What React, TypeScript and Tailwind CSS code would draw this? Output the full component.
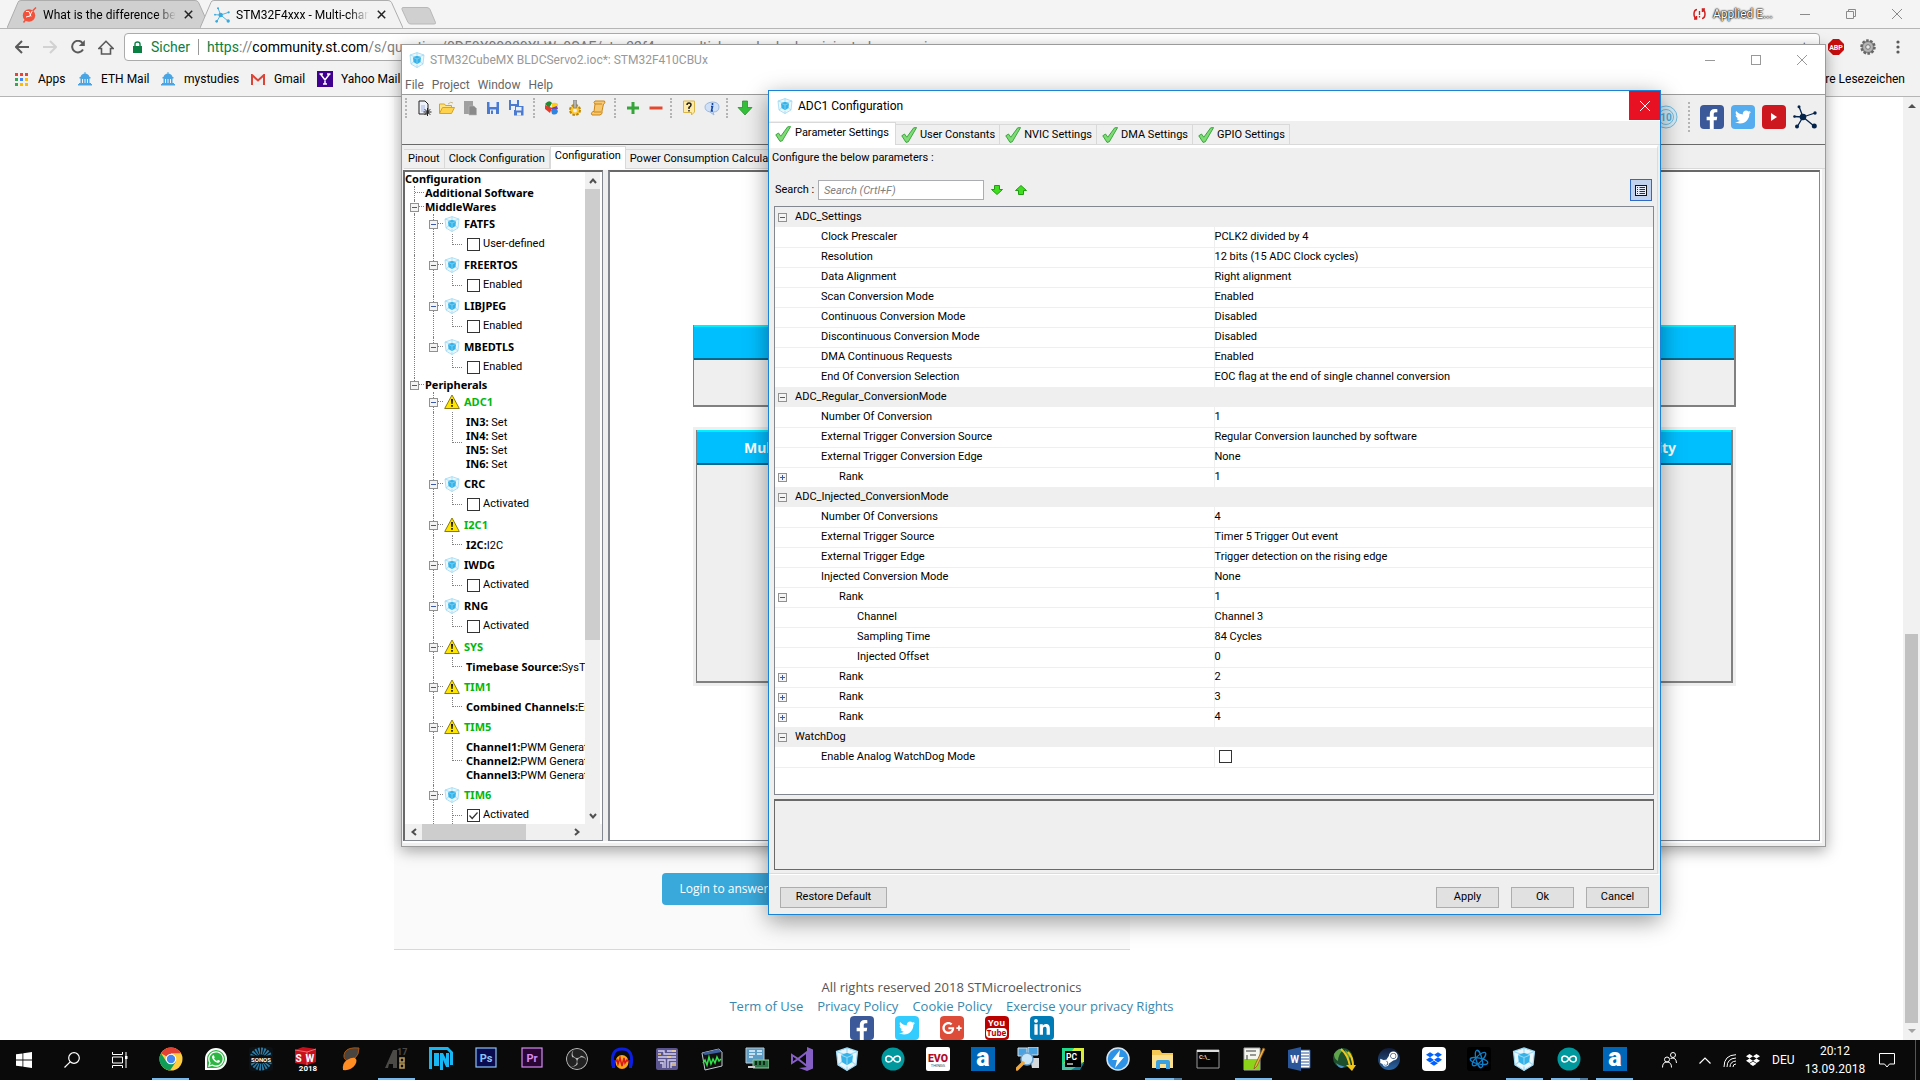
import { useState } from 'react'
import type { ReactNode } from 'react'
import {
    FaDropbox,
    FaFacebookF,
    FaGooglePlusG,
    FaLinkedinIn,
    FaSteamSymbol,
    FaTwitter,
    FaWhatsapp,
} from 'react-icons/fa'
import { SiObsstudio } from 'react-icons/si'

/* ---------- shared icons ---------- */

interface IconProps {
    className?: string
}

function CubeIcon({ className = 'h-4 w-4' }: IconProps) {
    return (
        <svg viewBox="0 0 16 16" className={className} aria-hidden="true">
            <path
                d="M8 .6 15 3l-1 9-6 3.6L2 12 1 3z"
                fill="#e9f7fd"
                stroke="#9fd9f3"
                strokeWidth=".8"
            />
            <path
                d="M1 3l7 2.6L15 3M8 .6v3M2 12l3-2.400M14 12l-3-2.400M8 13v2.500"
                fill="none"
                stroke="#9fd9f3"
                strokeWidth=".8"
            />
            <path d="M8 3.800 12 5.300 11.500 10 8 12.200 4.500 10 4 5.300z" fill="#35b3e8" />
            <path
                d="M4 5.300 8 7l4-1.700M8 7v5"
                fill="none"
                stroke="#8fd8f6"
                strokeWidth=".7"
            />
        </svg>
    )
}

function WarningIcon({ className = 'h-4 w-4' }: IconProps) {
    return (
        <svg viewBox="0 0 16 16" className={className} aria-hidden="true">
            <path
                d="M8 1 15.300 14.500H.7z"
                fill="#ffe600"
                stroke="#8a7a10"
                strokeWidth="1"
                strokeLinejoin="round"
            />
            <path d="M7 5h2l-.4 5H7.400zM7.200 11h1.600v1.700H7.200z" fill="#111" />
        </svg>
    )
}

function CheckIcon() {
    return (
        <svg viewBox="0 0 16 16" className="h-4 w-4 shrink-0" aria-hidden="true">
            <path
                d="M.8 8.800 3.500 7l2.300 3.200L12.700.8 15.600.6 7.300 14.800 5 15.400z"
                fill="#7fdc74"
                stroke="#2f9e36"
                strokeWidth=".9"
                strokeLinejoin="round"
            />
        </svg>
    )
}

function NodesIcon({ className, color }: { className: string; color: string }) {
    return (
        <svg viewBox="0 0 24 24" className={className} aria-hidden="true">
            <path
                d="M10 12 6 1.500M10 12 22 8M10 12 1 11.500M10 12 4 22M10 12l11 9"
                stroke={color}
                strokeWidth="1.300"
            />
            <g fill={color}>
                <circle cx="10" cy="12" r="3.300" />
                <circle cx="6" cy="1.800" r="1.500" />
                <circle cx="22" cy="8" r="1.700" />
                <circle cx="1.500" cy="11.500" r="1.300" />
                <circle cx="4" cy="21.500" r="2" />
                <circle cx="21.300" cy="21" r="2.500" />
            </g>
        </svg>
    )
}

function CloseGlyph({ className = 'h-2.5 w-2.5' }: IconProps) {
    return (
        <svg viewBox="0 0 10 10" className={className} aria-hidden="true">
            <path d="M0 0l10 10M10 0 0 10" stroke="currentColor" fill="none" />
        </svg>
    )
}

function Expander({ open }: { open: boolean }) {
    return (
        <svg viewBox="0 0 9 9" className="h-[9px] w-[9px]" aria-hidden="true">
            <rect x=".5" y=".5" width="8" height="8" fill="#f4f4f4" stroke="#919191" />
            <path
                d={open ? 'M2 4.500h5' : 'M2 4.500h5M4.500 2v5'}
                stroke="#3b5aa9"
                fill="none"
            />
        </svg>
    )
}

function CheckBox({ id, checked = false }: { id: string; checked?: boolean }) {
    return (
        <span className="relative flex h-[13px] w-[13px] shrink-0">
            <input
                id={id}
                type="checkbox"
                defaultChecked={checked}
                className="peer h-[13px] w-[13px] appearance-none border border-[#333] bg-white"
            />
            <svg
                viewBox="0 0 13 13"
                className="pointer-events-none absolute inset-0 hidden peer-checked:block"
                aria-hidden="true"
            >
                <path d="M2.500 6.500l2.700 3L10.500 3.500" stroke="#333" fill="none" strokeWidth="1.200" />
            </svg>
        </span>
    )
}

/* ---------- browser ---------- */

function TabShape({ fill }: { fill: string }) {
    return (
        <svg
            viewBox="0 0 204 28"
            preserveAspectRatio="none"
            className="absolute inset-0 h-full w-full"
            aria-hidden="true"
        >
            <path
                d="M0 28 11 2.500Q11.500 .5 14 .5H189Q191.500 .5 192.500 2.500L204 28"
                fill={fill}
                stroke="#adadad"
            />
        </svg>
    )
}

function BrowserTab({
    icon,
    title,
    active,
}: {
    icon: ReactNode
    title: string
    active: boolean
}) {
    return (
        <div className={`relative -mr-2.5 h-7 w-[203px] ${active ? 'z-10' : ''}`}>
            <TabShape fill={active ? '#f2f2f2' : '#d0d0d0'} />
            <div className="relative flex h-full items-center pt-px pr-[17px] pl-[14px]">
                <span className="flex h-4 w-4 items-center justify-center">{icon}</span>
                <button
                    type="button"
                    className="ml-[6px] min-w-0 flex-1 overflow-hidden mask-r-from-85% text-left whitespace-nowrap"
                >
                    {title}
                </button>
                <button type="button" title="Close tab" className="ml-[8px]">
                    <svg viewBox="0 0 9 9" className="h-[9px] w-[9px]" aria-hidden="true">
                        <path d="M.8.8l7.400 7.400M8.200.8.8 8.200" stroke="#222" strokeWidth="1.500" />
                    </svg>
                </button>
            </div>
        </div>
    )
}

function TabStrip() {
    return (
        <div className="flex h-[29px] border-b border-[#b5b5b5] bg-[#f4f4f4] pl-[7px]">
            <BrowserTab
                active={false}
                title="What is the difference between"
                icon={
                    <svg viewBox="0 0 16 16" className="h-4 w-4" aria-hidden="true">
                        <circle cx="8" cy="8.500" r="6.200" fill="#f0523d" />
                        <path
                            d="M12 3 10 6l-1 3-4 1M5 4.500h3l2 5"
                            stroke="#fff"
                            fill="none"
                            strokeWidth="1"
                        />
                        <path d="M15 .5 11.500 4M2.500 15.500 4.500 13" stroke="#f0523d" strokeWidth="1.500" />
                    </svg>
                }
            />
            <BrowserTab
                active
                title="STM32F4xxx - Multi-channel ADC"
                icon={<NodesIcon className="h-4 w-4" color="#39a9dc" />}
            />
            <button type="button" title="New tab" className="mt-[7px] ml-[8px] h-[18px] w-9">
                <svg viewBox="0 0 36 18" className="h-full w-full" aria-hidden="true">
                    <path
                        d="M2 .5H26Q28 .5 29 2.500L34.500 15.500Q35 17 33 17H10Q8 17 7 15.500L1 2.500Q.5 .5 2 .5z"
                        fill="#d0d0d0"
                        stroke="#b8b8b8"
                    />
                </svg>
            </button>
            <div className="ml-auto flex h-7 items-center pr-[18px] text-[#8a8a8a]">
                <svg viewBox="0 0 13 12" className="h-3 w-[13px]" aria-hidden="true">
                    <path
                        d="M4 1.500Q1 2 1 6t3 4.500M9 10.500q3-.5 3-4.500T9 1.500M3.500 8v3H1M9.500 4V1H12"
                        fill="none"
                        stroke="#d01f1f"
                        strokeWidth="1.500"
                    />
                    <path d="M6.500 3v4M6.500 8v1.500" stroke="#d01f1f" strokeWidth="1.300" />
                </svg>
                <span className="mr-[33px] ml-[7px] w-[54px] whitespace-nowrap text-white [text-shadow:0_0_2px_#000,0_0_2px_#000,0_0_1px_#000]">
                    Applied E...
                </span>
                <button type="button" title="Minimize" className="w-2.5 border-t border-current" />
                <button type="button" title="Restore" className="ml-9">
                    <svg viewBox="0 0 10 10" className="h-2.5 w-2.5" aria-hidden="true">
                        <path d="M.5 2.500h7v7h-7zM2.500 2.500v-2h7v7h-2" fill="none" stroke="currentColor" />
                    </svg>
                </button>
                <button type="button" title="Close" className="ml-9">
                    <CloseGlyph />
                </button>
            </div>
        </div>
    )
}

function AddressBar() {
    return (
        <div className="flex h-9 items-center px-[15px] text-[#5a5a5a]">
            <button type="button" title="Back">
                <svg viewBox="0 0 14 14" className="h-3.5 w-3.5" aria-hidden="true">
                    <path d="M14 7H1.500M7 1 1 7l6 6" fill="none" stroke="currentColor" strokeWidth="2" />
                </svg>
            </button>
            <button type="button" title="Forward" className="ml-3.5 text-[#d2d2d2]">
                <svg viewBox="0 0 14 14" className="h-3.5 w-3.5" aria-hidden="true">
                    <path d="M0 7h12.500M7 1l6 6-6 6" fill="none" stroke="currentColor" strokeWidth="2" />
                </svg>
            </button>
            <button type="button" title="Reload" className="ml-3.5">
                <svg viewBox="0 0 14 14" className="h-3.5 w-3.5" aria-hidden="true">
                    <path d="M12 9.500A5.800 5.800 0 1 1 11.500 3" fill="none" stroke="currentColor" strokeWidth="2" />
                    <path d="M13.800 0v6H7.800z" fill="currentColor" />
                </svg>
            </button>
            <button type="button" title="Home" className="ml-[13px]">
                <svg viewBox="0 0 16 15" className="h-[15px] w-4" aria-hidden="true">
                    <path
                        d="M8 1.300.8 8.500H3.500V14H12.500V8.500H15.200z"
                        fill="none"
                        stroke="currentColor"
                        strokeWidth="1.600"
                    />
                </svg>
            </button>
            <div className="ml-2.5 flex h-7 flex-1 items-center rounded-sm border border-[#ababab] bg-white pl-2 text-sm">
                <svg viewBox="0 0 9 12" className="h-3 w-[9px]" aria-hidden="true">
                    <path d="M0 5h9v7H0z" fill="#0b8043" />
                    <path d="M2 5V3Q2 1 4.500 1T7 3v2" fill="none" stroke="#0b8043" strokeWidth="1.400" />
                </svg>
                <span className="ml-[9px] text-[#0b8043]">Sicher</span>
                <span className="mx-2 h-4 w-px bg-[#999]" />
                <div className="min-w-0 flex-1 overflow-hidden whitespace-nowrap text-[#808080]">
                    <span className="text-[#0b8043]">https</span>://
                    <span className="text-black">community.st.com</span>
                    /s/question/0D50X00009XkWe0SAF/stm32f4xxx-multichannel-adc-dma-injected-conversion
                </div>
                <span className="mr-2 text-[#5a5a5a]">★</span>
            </div>
            <svg viewBox="0 0 16 16" className="ml-2 h-4 w-4" aria-hidden="true">
                <path d="M5 0h6l5 5v6l-5 5H5l-5-5V5z" fill="#c70d0d" />
                <text x="8" y="10.500" textAnchor="middle" fontSize="7" fontWeight="700" fill="#fff">
                    ABP
                </text>
            </svg>
            <svg viewBox="0 0 16 16" className="ml-4 h-4 w-4" aria-hidden="true">
                <circle cx="8" cy="8" r="6.500" fill="#8d8d8d" stroke="#666" strokeDasharray="2.500 1.500" strokeWidth="2.500" />
                <circle cx="8" cy="8" r="4.800" fill="#b5b5b5" />
                <circle cx="8" cy="8" r="2.300" fill="#e8e8e8" stroke="#777" />
            </svg>
            <svg viewBox="0 0 4 14" className="mr-[5px] ml-5 h-3.5 w-1" aria-hidden="true">
                <g fill="#5a5a5a">
                    <circle cx="2" cy="2" r="1.600" />
                    <circle cx="2" cy="7" r="1.600" />
                    <circle cx="2" cy="12" r="1.600" />
                </g>
            </svg>
        </div>
    )
}

const appColors = [
    '#ea4335', '#ea4335', '#ea4335',
    '#34a853', '#4285f4', '#fbbc05',
    '#34a853', '#fbbc05', '#fbbc05',
]

function AppsIcon() {
    return (
        <span className="grid h-[13px] w-[13px] grid-cols-3 gap-[2px]">
            {appColors.map((color, index) => (
                <span key={index} style={{ backgroundColor: color }} />
            ))}
        </span>
    )
}

function DomeIcon() {
    return (
        <svg viewBox="0 0 14 14" className="h-3.5 w-3.5" aria-hidden="true">
            <path
                d="M6.500 0h1v1.500Q11 2 11.500 5h1v1.500h-1V11H13v1h1v1.500H0V12h1v-1h1.500V6.500h-1V5h1Q3 2 6.500 1.500z"
                fill="#4aa5e4"
            />
            <path d="M4.500 7v4M7 7v4M9.500 7v4" stroke="#f2f2f2" />
        </svg>
    )
}

const bookmarks = [
    { id: 'apps', title: 'Apps', icon: <AppsIcon />, width: 'w-[63px]', gap: 'gap-2.5' },
    { id: 'eth', title: 'ETH Mail', icon: <DomeIcon />, width: 'w-[83px]', gap: 'gap-[9px]' },
    { id: 'studies', title: 'mystudies', icon: <DomeIcon />, width: 'w-[90px]', gap: 'gap-[9px]' },
    {
        id: 'gmail',
        title: 'Gmail',
        icon: (
            <svg viewBox="0 0 14 11" className="h-[11px] w-3.5" aria-hidden="true">
                <path d="M0 0h14v11H0z" fill="#eee" />
                <path d="M1 11V1l6 5.500L13 1v10" fill="none" stroke="#dc4437" strokeWidth="2" />
            </svg>
        ),
        width: 'w-[66px]',
        gap: 'gap-[9px]',
    },
    {
        id: 'yahoo',
        title: 'Yahoo Mail',
        icon: (
            <svg viewBox="0 0 16 16" className="h-4 w-4" aria-hidden="true">
                <path d="M0 0h16v16H0z" fill="#400090" />
                <path d="M3.500 3 8 9l4.500-6M8 8.500V13M6 13h4M2.500 3H6M10 3h3.500" stroke="#fff" fill="none" strokeWidth="1.500" />
            </svg>
        ),
        width: 'w-[90px]',
        gap: 'gap-2',
    },
]

function BookmarkBar() {
    return (
        <div className="flex h-8 items-center border-b border-[#b5b5b5] px-[15px] pb-[3px]">
            {bookmarks.map((item) => (
                <a
                    key={item.id}
                    href="#"
                    className={`flex shrink-0 items-center whitespace-nowrap ${item.width} ${item.gap}`}
                >
                    {item.icon}
                    {item.title}
                </a>
            ))}
            <a href="#" className="ml-auto">
                Andere Lesezeichen
            </a>
        </div>
    )
}

const footerLinks = [
    'Term of Use',
    'Privacy Policy',
    'Cookie Policy',
    'Exercise your privacy Rights',
]

function WebPage() {
    return (
        <main className="flex min-h-0 flex-1 bg-white">
            <div className="flex flex-1 flex-col overflow-hidden font-['Open_Sans',sans-serif]">
                <section className="mr-[773px] ml-[394px] h-[853px] shrink-0 border-b border-[#d8d8d8] bg-[#fafafa] pt-[776px] pl-[268px]">
                    <button
                        type="button"
                        className="h-8 w-[124px] rounded bg-[#39a9dc] text-[12px] text-white"
                    >
                        Login to answer
                    </button>
                </section>
                <footer className="flex flex-col items-center pt-7 text-[13px] leading-[19px] text-[#555]">
                    <p>All rights reserved 2018 STMicroelectronics</p>
                    <nav className="flex gap-3.5 text-[#3a87ad]">
                        {footerLinks.map((link) => (
                            <a key={link} href="#">
                                {link}
                            </a>
                        ))}
                    </nav>
                    <div className="flex gap-[21px] text-white">
                        <a href="#" aria-label="Facebook" className="flex h-6 w-6 items-end justify-center rounded bg-[#3b5998]">
                            <FaFacebookF className="h-5 w-5" />
                        </a>
                        <a href="#" aria-label="Twitter" className="flex h-6 w-6 items-center justify-center rounded bg-[#33ccff]">
                            <FaTwitter className="h-4 w-4" />
                        </a>
                        <a href="#" aria-label="Google+" className="flex h-6 w-6 items-center justify-center rounded bg-[#dd4b39]">
                            <FaGooglePlusG className="h-5 w-5" />
                        </a>
                        <a href="#" aria-label="YouTube" className="flex h-6 w-6 flex-col items-center justify-center rounded bg-[#bb0000] text-[9px] leading-[10px] font-bold">
                            <span>You</span>
                            <span className="rounded-sm bg-white px-px text-[8px] text-[#bb0000]">Tube</span>
                        </a>
                        <a href="#" aria-label="LinkedIn" className="flex h-6 w-6 items-center justify-center rounded bg-[#007bb6]">
                            <FaLinkedinIn className="h-[18px] w-[18px]" />
                        </a>
                    </div>
                </footer>
            </div>
            <div className="flex w-[17px] flex-col items-center bg-[#f1f1f1]">
                <span className="mt-[7px] border-x-4 border-b-4 border-x-transparent border-b-[#505050]" />
                <span className="mt-auto h-[389px] w-[13px] bg-[#c1c1c1]" />
                <span className="mt-1.5 mb-[7px] border-x-4 border-t-4 border-x-transparent border-t-[#a3a3a3]" />
            </div>
        </main>
    )
}

/* ---------- CubeMX window ---------- */

function Grip({ className = 'h-5' }: IconProps) {
    return <span className={`w-0.5 border-l-2 border-dotted border-[#b4b4b4] ${className}`} />
}

function ToolButton({ title, children }: { title: string; children: ReactNode }) {
    return (
        <button type="button" title={title} className="flex w-[23px] justify-center">
            <svg viewBox="0 0 16 16" className="h-4 w-4" aria-hidden="true">
                {children}
            </svg>
        </button>
    )
}

function ToolBar() {
    return (
        <div className="flex h-[50px] shrink-0 justify-between border-b border-[#696969] bg-[#efefef] pr-2 pl-[3px]">
            <div className="flex h-[26px] items-center">
                <Grip />
                <span className="w-[5px]" />
                <ToolButton title="New Project">
                    <path d="M3 1h6l3 3v10H3z" fill="#eef2fb" stroke="#222" />
                    <path d="M5 5h4v7H5z" fill="#c9d2ee" />
                    <path d="M11.500 8v8M7.500 12h8M8.700 9.200l5.600 5.600M14.300 9.200l-5.600 5.600" stroke="#222" />
                </ToolButton>
                <ToolButton title="Open Project">
                    <path d="M.5 13V4h5l1 1.500h6V8" fill="#ffe387" stroke="#d9a520" />
                    <path d="M.5 13.500 3.500 7.500h12l-3 6z" fill="#ffd24d" stroke="#d9a520" />
                    <path d="M9 4q3-3 5-1" stroke="#c8b98a" fill="none" />
                </ToolButton>
                <ToolButton title="Paste">
                    <path d="M2 1h9v13H2z" fill="#a0a0a0" />
                    <path d="M7 6h5l2.500 2.500V15H7z" fill="#8a8a8a" stroke="#b5b5b5" strokeWidth=".6" />
                </ToolButton>
                <ToolButton title="Save">
                    <path d="M2 2h12v12H2z" fill="#4a7bd0" />
                    <path d="M4.500 2h7v5h-7zM5 9.500h6V14H5z" fill="#e9f0fc" />
                    <path d="M6 10.500h2V14H6z" fill="#4a7bd0" />
                </ToolButton>
                <ToolButton title="Save All">
                    <path d="M1 0h10v10H1zM6 6h9.500v9.500H6z" fill="#4a7bd0" />
                    <path d="M3 0h6v4H3zM3 6h4v4H3zM8 7h5.500v3.500H8zM9 12.500h4v3H9z" fill="#e9f0fc" />
                </ToolButton>
                <span className="w-1.5" />
                <Grip />
                <span className="w-[5px]" />
                <ToolButton title="Pinout colors">
                    <path d="M1 4q4-5 7-1L5 8z" fill="#1f8a2e" />
                    <path d="M1 5v4l5 4 2-5z" fill="#e5392b" />
                    <path d="M8 3q7-1 6 3L8 9z" fill="#ffcc18" />
                    <path d="M7 8 13 6l1 3-5 2z" fill="#7a3fb0" />
                    <path d="M7 10q5-3 7 1-1 5-6 3z" fill="#2f86e0" />
                </ToolButton>
                <ToolButton title="Generate Code">
                    <circle cx="8" cy="10" r="5" fill="#ffc72e" stroke="#b98610" strokeDasharray="2.500 1.400" strokeWidth="2" />
                    <circle cx="8" cy="10.500" r="2" fill="#efefef" />
                    <path d="M6.500 0h3v8h-3z" fill="#b0b0b0" stroke="#777" strokeWidth=".6" />
                </ToolButton>
                <ToolButton title="Generate Report">
                    <path
                        d="M5 1h9.500q1.500 2-1 3L12 11q1 3-2 4H2q-2-2 1-3.500h1L5 4q-2-1.500 0-3z"
                        fill="#f7c872"
                        stroke="#c98517"
                    />
                    <path d="M5 4h7M4 12h7" stroke="#c98517" />
                </ToolButton>
                <span className="w-[5px]" />
                <Grip />
                <span className="w-[5px]" />
                <ToolButton title="Zoom In">
                    <path d="M6.500 2h3v4.500H14v3H9.500V14h-3V9.500H2v-3h4.500z" fill="#35a53a" />
                </ToolButton>
                <ToolButton title="Zoom Out">
                    <path d="M1.500 6.500h13v3h-13z" fill="#e2492f" />
                </ToolButton>
                <span className="w-[3px]" />
                <Grip />
                <span className="w-[5px]" />
                <ToolButton title="Help">
                    <path d="M2.500 1h11v11l-3 3v-2.500h-8z" fill="#ffeaa6" stroke="#d9b64a" />
                    <path d="M6 5q0-2 2-2t2 2q0 1.200-2 2.500V9M8 10v1.500" stroke="#222" fill="none" strokeWidth="1.500" />
                </ToolButton>
                <ToolButton title="About">
                    <path d="M8 2q7 0 7 5t-6 5l1 3-4-3Q1 11 1 7t7-5z" fill="#cfe0f7" stroke="#9db9de" />
                    <path d="M8.500 3v2M7 6.500h1.500L7.500 11H9" stroke="#1747a6" fill="none" strokeWidth="1.600" />
                </ToolButton>
                <span className="w-[3px]" />
                <Grip />
                <span className="w-[5px]" />
                <ToolButton title="Update">
                    <path d="M5.500 1h5v6.500H15L8 15 1 7.500h4.500z" fill="#35c03a" stroke="#23862a" strokeWidth=".7" />
                </ToolButton>
            </div>
            <div className="flex h-[44px] items-center gap-[7px] text-white">
                <svg viewBox="0 0 24 24" className="h-6 w-6" aria-hidden="true">
                    <circle cx="12" cy="12" r="11" fill="#d6ecf7" stroke="#74bcdf" />
                    <circle cx="12" cy="12" r="7.500" fill="none" stroke="#74bcdf" />
                    <text x="12" y="15.500" textAnchor="middle" fontSize="10" fontWeight="700" fill="#58add8">
                        10
                    </text>
                </svg>
                <Grip className="mx-[3px] h-[30px]" />
                <a href="#" aria-label="Facebook" className="flex h-6 w-6 items-end justify-end rounded-sm bg-[#3b5998] pr-0.5">
                    <FaFacebookF className="h-5 w-5" />
                </a>
                <a href="#" aria-label="Twitter" className="flex h-6 w-6 items-center justify-center rounded-sm bg-[#55acee]">
                    <FaTwitter className="h-4 w-4" />
                </a>
                <a href="#" aria-label="YouTube" className="flex h-6 w-6 items-center justify-center rounded bg-[#cc181e]">
                    <span className="border-y-4 border-l-[6px] border-y-transparent border-l-white" />
                </a>
                <a href="#" aria-label="ST Community" className="flex h-6 w-6">
                    <NodesIcon className="h-6 w-6" color="#03234b" />
                </a>
            </div>
        </div>
    )
}

interface TreeChild {
    check?: string
    checked?: boolean
    lines?: [string, string][]
}
interface TreeItem extends TreeChild {
    name: string
    configured?: boolean
    warning?: boolean
}

const middlewares: TreeItem[] = [
    { name: 'FATFS', check: 'User-defined' },
    { name: 'FREERTOS', check: 'Enabled' },
    { name: 'LIBJPEG', check: 'Enabled' },
    { name: 'MBEDTLS', check: 'Enabled' },
]

const peripherals: TreeItem[] = [
    {
        name: 'ADC1',
        configured: true,
        warning: true,
        lines: [
            ['IN3:', ' Set'],
            ['IN4:', ' Set'],
            ['IN5:', ' Set'],
            ['IN6:', ' Set'],
        ],
    },
    { name: 'CRC', check: 'Activated' },
    { name: 'I2C1', configured: true, warning: true, lines: [['I2C:', 'I2C']] },
    { name: 'IWDG', check: 'Activated' },
    { name: 'RNG', check: 'Activated' },
    { name: 'SYS', configured: true, warning: true, lines: [['Timebase Source:', 'SysTick']] },
    { name: 'TIM1', configured: true, warning: true, lines: [['Combined Channels:', 'Encoder Mode']] },
    {
        name: 'TIM5',
        configured: true,
        warning: true,
        lines: [
            ['Channel1:', 'PWM Generation CH1'],
            ['Channel2:', 'PWM Generation CH2'],
            ['Channel3:', 'PWM Generation CH3'],
        ],
    },
    { name: 'TIM6', configured: true, check: 'Activated', checked: true },
]

const treeBold = "font-['Noto_Sans',sans-serif] font-bold"

// one 19px wide column of the dotted tree lines
function Guide({
    branch = false,
    line = true,
    last = false,
    open,
}: {
    branch?: boolean
    line?: boolean
    last?: boolean
    open?: boolean
}) {
    return (
        <span className="relative flex w-[19px] shrink-0 self-stretch">
            <span
                className={`w-2.5 border-r border-dotted ${line ? 'border-[#808080]' : 'border-transparent'} ${last ? 'h-1/2' : ''}`}
            />
            {branch ? (
                <span className="h-1/2 flex-1 border-b border-dotted border-[#808080]" />
            ) : null}
            {open !== undefined ? (
                <span className="absolute inset-0 flex items-center justify-center">
                    <Expander open={open} />
                </span>
            ) : null}
        </span>
    )
}

function TreeGroup({
    title,
    items,
    rootLine,
}: {
    title: string
    items: TreeItem[]
    rootLine: boolean
}) {
    return (
        <li>
            <div className={`flex h-3.5 items-center ${treeBold}`}>
                <Guide branch open last={!rootLine} />
                <span className="pl-px">{title}</span>
            </div>
            <ul>
                {items.map((item, index) => {
                    const lastItem = rootLine && index === items.length - 1
                    return (
                        <li key={item.name}>
                            <div className={`flex h-5 items-center ${treeBold}`}>
                                <Guide line={rootLine} />
                                <Guide branch open last={lastItem} />
                                <span className="w-[21px] pl-px">
                                    {item.warning ? <WarningIcon /> : <CubeIcon />}
                                </span>
                                <span className={item.configured ? 'text-[#00b80e]' : ''}>
                                    {item.name}
                                </span>
                            </div>
                            {item.check ? (
                                <div className="flex h-[21px] items-center">
                                    <Guide line={rootLine} />
                                    <Guide line={!lastItem} />
                                    <Guide branch last={!item.checked} />
                                    <label className="flex items-center gap-[3px] pl-[5px]">
                                        <CheckBox id={`tree-${item.name}`} checked={item.checked} />
                                        {item.check}
                                    </label>
                                </div>
                            ) : null}
                            {item.lines ? (
                                <div className="flex items-center">
                                    <Guide line={rootLine} />
                                    <Guide line={!lastItem} />
                                    <Guide branch last />
                                    <div className="py-[3px] pl-1 leading-[14px] whitespace-pre">
                                        {item.lines.map(([label, value]) => (
                                            <p key={label} className="h-3.5">
                                                <b className={treeBold}>{label}</b>
                                                {value}
                                            </p>
                                        ))}
                                    </div>
                                </div>
                            ) : null}
                        </li>
                    )
                })}
            </ul>
        </li>
    )
}

function Chevron({ turn = '' }: { turn?: string }) {
    return (
        <svg viewBox="0 0 8 8" className={`h-2 w-2 ${turn}`} aria-hidden="true">
            <path d="M1 6l3-3.500L7 6" fill="none" stroke="#505050" strokeWidth="2" />
        </svg>
    )
}

function TreePanel() {
    return (
        <div className="flex w-[200px] shrink-0 flex-col border-2 border-r border-b border-[#828790] border-t-[#696969] border-l-[#696969] bg-white">
            <div className="flex min-h-0 flex-1">
                <div className="min-w-0 flex-1 overflow-hidden">
                    <ul>
                        <li className={`h-3.5 leading-[14px] ${treeBold}`}>Configuration</li>
                        <li className={`flex h-3.5 items-center ${treeBold}`}>
                            <Guide branch />
                            <span className="pl-px">Additional Software</span>
                        </li>
                        <TreeGroup title="MiddleWares" items={middlewares} rootLine />
                        <TreeGroup title="Peripherals" items={peripherals} rootLine={false} />
                    </ul>
                </div>
                <div className="mr-0.5 flex w-[15px] flex-col items-center bg-[#f0f0f0]">
                    <span className="flex h-[17px] items-center">
                        <Chevron />
                    </span>
                    <span className="h-[451px] w-full bg-[#cdcdcd]" />
                    <span className="mt-auto flex h-[17px] items-center">
                        <Chevron turn="rotate-180" />
                    </span>
                </div>
            </div>
            <div className="flex h-4 items-center bg-[#f0f0f0]">
                <span className="flex w-[17px] justify-center">
                    <Chevron turn="-rotate-90" />
                </span>
                <span className="h-full w-[104px] bg-[#cdcdcd]" />
                <span className="mr-[17px] ml-auto flex w-[17px] justify-center">
                    <Chevron turn="rotate-90" />
                </span>
            </div>
        </div>
    )
}

const headerBar =
    'flex h-[35px] items-center justify-between border-t-2 border-b-2 border-t-[#00f0ff] border-b-[#00698c] bg-[#00bfff]'

function ConfigCanvas() {
    return (
        <div className="ml-[5px] flex-1 border-2 border-r border-b border-[#828790] border-t-[#696969] bg-white px-[83px] pt-[153px]">
            <div className="h-[82px] border-r-2 border-b-2 border-l border-[#808080] bg-[#efefef]">
                <div className={headerBar} />
            </div>
            <div className="mt-5 bg-[#efefef] p-[3px]">
                <div className="h-[253px] border-r-2 border-b-2 border-l border-[#808080]">
                    <div
                        className={`${headerBar} px-[47px] font-['Noto_Sans',sans-serif] text-[14px] font-bold text-white`}
                    >
                        <span>Multimedia</span>
                        <span className="pr-2">Connectivity</span>
                    </div>
                </div>
            </div>
        </div>
    )
}

const mainTabs = ['Pinout', 'Clock Configuration', 'Configuration', 'Power Consumption Calculator']

function CubeWindow() {
    const [activeTab, setActiveTab] = useState('Configuration')

    return (
        <section
            aria-label="STM32CubeMX"
            className="absolute top-[44px] right-[94px] bottom-[233px] left-[401px] flex flex-col border border-[#9b9b9b] bg-[#efefef] text-[11px] shadow-[0_4px_14px_rgba(0,0,0,0.35)]"
        >
            <header className="flex h-[30px] shrink-0 items-center bg-white pr-[18px] pl-[7px] text-[12px] text-[#999]">
                <CubeIcon />
                <h1 className="ml-[5px]">STM32CubeMX BLDCServo2.ioc*: STM32F410CBUx</h1>
                <button type="button" title="Minimize" className="ml-auto w-2.5 border-t border-current" />
                <button type="button" title="Maximize" className="ml-9 h-2.5 w-2.5 border border-current" />
                <button type="button" title="Close" className="ml-9">
                    <CloseGlyph />
                </button>
            </header>
            <nav className="flex h-5 shrink-0 items-center gap-2 border-b border-[#9b9b9b] bg-white pl-[3px] text-[12px] text-[#666]">
                {['File', 'Project', 'Window', 'Help'].map((menu) => (
                    <button key={menu} type="button">
                        {menu}
                    </button>
                ))}
            </nav>
            <ToolBar />
            <div role="tablist" className="flex h-6 shrink-0 items-end pl-0.5">
                {mainTabs.map((tab) => (
                    <button
                        key={tab}
                        type="button"
                        role="tab"
                        aria-selected={tab === activeTab}
                        onClick={() => setActiveTab(tab)}
                        className={
                            tab === activeTab
                                ? 'h-[23px] border border-b-0 border-[#d9d9d9] bg-white px-1 pb-1'
                                : 'h-5 border border-l-0 border-[#d9d9d9] bg-[#f0f0f0] px-1'
                        }
                    >
                        {tab}
                    </button>
                ))}
                <span className="flex-1 border-b border-[#d9d9d9]" />
            </div>
            <div className="mr-[3px] mb-[3px] ml-px flex min-h-0 flex-1 border-t border-r-2 border-b-2 border-[#fdfdfd]">
                <TreePanel />
                <ConfigCanvas />
            </div>
        </section>
    )
}

/* ---------- ADC1 dialog ---------- */

interface Param {
    name: string
    value?: string
    level: 'group' | 'param' | 'rank' | 'field'
    open?: boolean
    checkbox?: boolean
}

const params: Param[] = [
    { level: 'group', name: 'ADC_Settings', open: true },
    { level: 'param', name: 'Clock Prescaler', value: 'PCLK2 divided by 4' },
    { level: 'param', name: 'Resolution', value: '12 bits (15 ADC Clock cycles)' },
    { level: 'param', name: 'Data Alignment', value: 'Right alignment' },
    { level: 'param', name: 'Scan Conversion Mode', value: 'Enabled' },
    { level: 'param', name: 'Continuous Conversion Mode', value: 'Disabled' },
    { level: 'param', name: 'Discontinuous Conversion Mode', value: 'Disabled' },
    { level: 'param', name: 'DMA Continuous Requests', value: 'Enabled' },
    {
        level: 'param',
        name: 'End Of Conversion Selection',
        value: 'EOC flag at the end of single channel conversion',
    },
    { level: 'group', name: 'ADC_Regular_ConversionMode', open: true },
    { level: 'param', name: 'Number Of Conversion', value: '1' },
    {
        level: 'param',
        name: 'External Trigger Conversion Source',
        value: 'Regular Conversion launched by software',
    },
    { level: 'param', name: 'External Trigger Conversion Edge', value: 'None' },
    { level: 'rank', name: 'Rank', value: '1', open: false },
    { level: 'group', name: 'ADC_Injected_ConversionMode', open: true },
    { level: 'param', name: 'Number Of Conversions', value: '4' },
    { level: 'param', name: 'External Trigger Source', value: 'Timer 5 Trigger Out event' },
    { level: 'param', name: 'External Trigger Edge', value: 'Trigger detection on the rising edge' },
    { level: 'param', name: 'Injected Conversion Mode', value: 'None' },
    { level: 'rank', name: 'Rank', value: '1', open: true },
    { level: 'field', name: 'Channel', value: 'Channel 3' },
    { level: 'field', name: 'Sampling Time', value: '84 Cycles' },
    { level: 'field', name: 'Injected Offset', value: '0' },
    { level: 'rank', name: 'Rank', value: '2', open: false },
    { level: 'rank', name: 'Rank', value: '3', open: false },
    { level: 'rank', name: 'Rank', value: '4', open: false },
    { level: 'group', name: 'WatchDog', open: true },
    { level: 'param', name: 'Enable Analog WatchDog Mode', checkbox: true },
]

const indent = {
    group: 'pl-[7px]',
    param: 'pl-[33px]',
    rank: 'pl-[51px]',
    field: 'pl-[69px]',
}

function ParamRow({ param }: { param: Param }) {
    const label = (
        <div className="flex items-center pl-[3px]">
            <span className="w-[10px]">
                {param.open !== undefined ? <Expander open={param.open} /> : null}
            </span>
            {param.checkbox ? (
                <label htmlFor="analog-watchdog" className={indent[param.level]}>
                    {param.name}
                </label>
            ) : (
                <span className={indent[param.level]}>{param.name}</span>
            )}
        </div>
    )
    if (param.level === 'group') {
        return (
            <tr className="h-5 bg-[#efefef]">
                <th colSpan={2} className="p-0 text-left font-normal">
                    {label}
                </th>
            </tr>
        )
    }
    return (
        <tr className="h-5 border-b border-[#efefef]">
            <td className="border-r border-[#efefef] p-0">{label}</td>
            <td className="p-0">
                {param.checkbox ? (
                    <span className="flex pl-1">
                        <CheckBox id="analog-watchdog" />
                    </span>
                ) : (
                    param.value
                )}
            </td>
        </tr>
    )
}

function GreenArrow({ up = false }: { up?: boolean }) {
    return (
        <svg viewBox="0 0 12 10" className={`h-2.5 w-3 ${up ? 'rotate-180' : ''}`} aria-hidden="true">
            <path d="M3.500.5h5v4h3L6 9.500.5 4.500h3z" fill="#3fdc1f" stroke="#1f9e12" />
        </svg>
    )
}

const dialogTabs = [
    'Parameter Settings',
    'User Constants',
    'NVIC Settings',
    'DMA Settings',
    'GPIO Settings',
]

const dialogButton = 'h-[21px] border border-[#adadad] bg-[#e1e1e1]'

function AdcDialog() {
    const [activeTab, setActiveTab] = useState(dialogTabs[0])

    return (
        <section
            role="dialog"
            aria-label="ADC1 Configuration"
            className="absolute top-[90px] right-[259px] bottom-[165px] left-[768px] flex flex-col border border-[#1883d7] bg-[#efefef] text-[11px] shadow-[0_6px_22px_rgba(0,0,0,0.4)]"
        >
            <header className="flex h-[30px] shrink-0 items-center bg-white pl-2 text-[12px]">
                <CubeIcon />
                <h2 className="ml-[5px]">ADC1 Configuration</h2>
                <button
                    type="button"
                    title="Close"
                    className="ml-auto flex h-[29px] w-[31px] items-center justify-center self-start bg-[#e81123] text-white"
                >
                    <CloseGlyph />
                </button>
            </header>
            <div role="tablist" className="flex h-6 shrink-0 items-end">
                {dialogTabs.map((tab) => (
                    <button
                        key={tab}
                        type="button"
                        role="tab"
                        aria-selected={tab === activeTab}
                        onClick={() => setActiveTab(tab)}
                        className={
                            tab === activeTab
                                ? 'flex h-[23px] items-center gap-1 border-t border-r border-[#d9d9d9] bg-white px-[6px] pb-px'
                                : 'flex h-[21px] items-center gap-[3px] border-t border-r border-b border-[#d9d9d9] bg-[#f0f0f0] pt-px pr-1 pl-[5px]'
                        }
                    >
                        <CheckIcon />
                        {tab}
                    </button>
                ))}
                <span className="flex-1 border-b border-[#d9d9d9]" />
            </div>
            <div className="mr-0.5 flex min-h-0 flex-1 flex-col border-t-[3px] border-r border-b border-t-white border-r-[#dcdcdc] border-b-[#dcdcdc] pr-[3px] pb-[3px] pl-[5px]">
                <p className="-ml-0.5 h-[18px] leading-5">Configure the below parameters :</p>
                <div className="mt-[14px] flex h-5 shrink-0 items-center">
                    <label htmlFor="search" className="w-11 pl-px">
                        Search :
                    </label>
                    <input
                        id="search"
                        type="text"
                        placeholder="Search (Crtl+F)"
                        className="h-5 w-[166px] border border-[#abadb3] bg-white px-[5px] placeholder:text-[#808080] placeholder:italic"
                    />
                    <button type="button" title="Next" className="ml-[7px]">
                        <GreenArrow />
                    </button>
                    <button type="button" title="Previous" className="ml-3">
                        <GreenArrow up />
                    </button>
                    <button
                        type="button"
                        title="Categorized view"
                        className="mr-0.5 ml-auto flex h-[22px] w-[22px] items-center justify-center border border-[#316ac5] bg-[#c1d2ee]"
                    >
                        <svg viewBox="0 0 12 11" className="h-[11px] w-3" aria-hidden="true">
                            <rect x=".5" y=".5" width="11" height="10" fill="#e8eefb" stroke="#111" />
                            <path d="M2 2.500h1M2 4.500h1M2 6.500h1M2 8.500h1M4.500 2.500H10M4.500 4.500H10M4.500 6.500H10M4.500 8.500H10" stroke="#1b2f8a" />
                        </svg>
                    </button>
                </div>
                <div className="mt-[6px] min-h-0 flex-1 overflow-hidden border border-[#828790] bg-white">
                    <table className="w-full table-fixed border-collapse leading-[14px]">
                        <tbody>
                            {params.map((param, index) => (
                                <ParamRow key={index} param={param} />
                            ))}
                        </tbody>
                    </table>
                </div>
                <div className="mt-1 h-[71px] shrink-0 border border-t-2 border-[#696969]" />
            </div>
            <footer className="flex h-10 shrink-0 items-center gap-3 border-t border-white pt-[5px] pr-[11px] pl-[11px]">
                <button type="button" className={`${dialogButton} mr-auto w-[107px]`}>
                    Restore Default
                </button>
                {['Apply', 'Ok', 'Cancel'].map((label) => (
                    <button key={label} type="button" className={`${dialogButton} w-[63px]`}>
                        {label}
                    </button>
                ))}
            </footer>
        </section>
    )
}

/* ---------- taskbar ---------- */

function AppArt({ children }: { children: ReactNode }) {
    return (
        <svg viewBox="0 0 24 24" className="h-6 w-6" aria-hidden="true">
            {children}
        </svg>
    )
}

function AdobeArt({ text, color, fill }: { text: string; color: string; fill: string }) {
    return (
        <AppArt>
            <rect x="2" y="1" width="20" height="19" fill={fill} stroke={color} strokeWidth="1.200" />
            <text x="12" y="14.500" textAnchor="middle" fontSize="11" fontWeight="700" fill={color}>
                {text}
            </text>
        </AppArt>
    )
}

const arduinoArt = (
    <AppArt>
        <circle cx="12" cy="12" r="11.500" fill="#00979d" />
        <path
            d="M12 12q-2-3-4.200-3a3 3 0 0 0 0 6q2.200 0 4.200-3t4.200-3a3 3 0 0 1 0 6q-2.200 0-4.200-3z"
            fill="none"
            stroke="#fff"
            strokeWidth="1.500"
        />
    </AppArt>
)

const acrylicArt = (
    <AppArt>
        <path d="M0 0h24v24H0z" fill="#0067b8" />
        <text x="12" y="19" textAnchor="middle" fontSize="25" fontWeight="900" fill="#fff">
            a
        </text>
    </AppArt>
)

const cubeArt = <CubeIcon className="h-6 w-6" />

interface TaskApp {
    id: string
    art: ReactNode
    running?: boolean
    stacked?: boolean
}

const taskApps: TaskApp[] = [
    {
        id: 'Chrome',
        running: true,
        art: (
            <AppArt>
                <circle cx="12" cy="12" r="11.500" fill="#ffcd40" />
                <path d="M12 12 2 6.200A11.500 11.500 0 0 1 22 6.200H12z" fill="#e34133" />
                <path d="M2 6.200A11.500 11.500 0 0 0 11 23.500L17 14.500 12 12 7 14z" fill="#109d58" />
                <circle cx="12" cy="12" r="5.300" fill="#fff" />
                <circle cx="12" cy="12" r="4.200" fill="#4587f3" />
            </AppArt>
        ),
    },
    {
        id: 'WhatsApp',
        art: (
            <span className="flex h-[22px] w-[22px] items-center justify-center rounded-full rounded-bl border-2 border-white bg-[#2cb742] text-white">
                <FaWhatsapp className="h-[18px] w-[18px]" />
            </span>
        ),
    },
    {
        id: 'Sonos',
        art: (
            <AppArt>
                <rect width="24" height="24" rx="3" fill="#0b1115" />
                <circle cx="12" cy="12" r="8" fill="none" stroke="#2c7ea8" strokeWidth="7" strokeDasharray="1.500 1" />
                <path d="M0 8.500h24v7H0z" fill="#0b1115" />
                <text x="12" y="14.500" textAnchor="middle" fontSize="6" fontWeight="700" fill="#fff">
                    SONOS
                </text>
            </AppArt>
        ),
    },
    {
        id: 'SolidWorks',
        art: (
            <AppArt>
                <path d="M1 3 9 0l13 2v13l-9 3L1 16z" fill="#c8101c" />
                <path d="M1 3l12 2 9-3M13 5v13" stroke="#ef6a6f" fill="none" />
                <text x="1.500" y="14.500" fontSize="10" fontWeight="700" fill="#fff">
                    S
                </text>
                <text x="11.500" y="14.500" fontSize="10" fontWeight="700" fill="#fff">
                    W
                </text>
                <text x="14" y="23.500" textAnchor="middle" fontSize="8" fontWeight="700" fill="#fff">
                    2018
                </text>
            </AppArt>
        ),
    },
    {
        id: 'Sublime',
        art: (
            <AppArt>
                <path d="M20 1Q9 0 6 5q-3 6 2 9 4-3 8-3 4-3 4-10z" fill="#4a4441" stroke="#a8540f" />
                <path d="M4 23Q3 16 8 13q5-3 8-2 3 2 0 7-4 6-12 5z" fill="#ff8d23" />
            </AppArt>
        ),
    },
    {
        id: 'Altium',
        running: true,
        art: (
            <AppArt>
                <path d="M1 21 9 3h4v18H9v-4H5l-1 4z" fill="#4c4a47" />
                <text x="13" y="8" fontSize="9" fontWeight="700" fill="#4c4a47">
                    17
                </text>
                <path d="M16 11h4v4h-4zM16 17h4v4h-4z" fill="none" stroke="#b99a5a" strokeWidth="1.600" />
            </AppArt>
        ),
    },
    {
        id: 'Designer',
        art: (
            <AppArt>
                <path d="M0 0h19l5 5v13h-3V6l-3-3H3v19H0z" fill="#18b6f2" />
                <path d="M5 6h5v13H5zM11 6h3l3 6V6h3v14h-3l-3-7v10h-3z" fill="#18b6f2" />
            </AppArt>
        ),
    },
    { id: 'Photoshop', art: <AdobeArt text="Ps" color="#8bc3f5" fill="#0a0a50" /> },
    { id: 'Premiere', art: <AdobeArt text="Pr" color="#d68cf0" fill="#2a0634" /> },
    {
        id: 'OBS',
        art: <SiObsstudio className="h-[22px] w-[22px] rounded-full bg-[#222] text-[#b9b9b9]" />,
    },
    {
        id: 'Audacity',
        art: (
            <AppArt>
                <path d="M3 19Q0 2 12 2t9 17" fill="none" stroke="#0b1fe0" strokeWidth="3" />
                <ellipse cx="12" cy="15" rx="6.500" ry="7" fill="#f9a61a" />
                <path d="M5 15l2-2 1 4 2-6 2 8 2-8 1 5 2-3 2 2" stroke="#d8181c" strokeWidth="1.500" fill="none" />
                <path d="M2 13v8h3v-8zM19 13v8h3v-8z" fill="#0b1fe0" />
            </AppArt>
        ),
    },
    {
        id: 'Eagle',
        art: (
            <AppArt>
                <rect x="1" y="1" width="22" height="22" rx="2" fill="#5c5690" />
                <path
                    d="M3 4h6v3h12M3 10h18M3 13h7v8M5 16h3v5M13 21v-8h8M16 21v-5h5M12 4h9"
                    stroke="#d5d1ee"
                    fill="none"
                    strokeWidth="1.300"
                />
                <path d="M3 7h3M17 4h4M12 10h4M16 18h5" stroke="#f1cf84" strokeWidth="1.300" />
            </AppArt>
        ),
    },
    {
        id: 'Scope',
        art: (
            <AppArt>
                <path d="M2 6 19 2l3 3v14L5 23z" fill="#111" stroke="#c3ccd5" />
                <path d="M2 6 19 2l3 3L5 8z" fill="#3d5f9e" />
                <path d="M3 16l2-3 2 5 2-8 2 7 2-5 2 4 2-6 2 4 2-2" stroke="#31e24a" fill="none" strokeWidth="1.500" />
            </AppArt>
        ),
    },
    {
        id: 'Flasher',
        art: (
            <AppArt>
                <path d="M1 1h18v15H1z" fill="#5d9cc4" stroke="#b8c9d2" />
                <path d="M4 4h6M12 4h5M4 7h6M12 7h5M4 10h4" stroke="#eaf6ff" strokeWidth="1.500" />
                <path d="M8 13h16v8H8z" fill="#2f7a4b" stroke="#91c8a1" />
                <path d="M3 19h7v2H3z" fill="#ccc" />
                <path d="M11 14v4M15 14v4M19 14v4" stroke="#0d2a17" strokeWidth="2" />
            </AppArt>
        ),
    },
    {
        id: 'Visual Studio',
        art: (
            <AppArt>
                <path d="M17 0l6 2.500v19L17 24 9 21l8-1z" fill="#865fc5" />
                <path d="M17 5 8 12l9 7zM2 8v8l6-4z" fill="none" stroke="#865fc5" strokeWidth="2" />
            </AppArt>
        ),
    },
    { id: 'CubeProgrammer', art: cubeArt },
    { id: 'Arduino IDE', art: arduinoArt },
    {
        id: 'EVO',
        art: (
            <AppArt>
                <rect width="24" height="24" rx="2" fill="#fff" />
                <text x="12" y="14.500" textAnchor="middle" fontSize="10.500" fontWeight="900" fill="#b20d25">
                    EVO
                </text>
                <text x="12" y="20" textAnchor="middle" fontSize="4" fill="#444">
                    THINGS
                </text>
            </AppArt>
        ),
    },
    { id: 'Atmel', art: acrylicArt },
    {
        id: 'Network',
        art: (
            <AppArt>
                <path d="M2 1h9v8H2zM12 0h10v8H12z" fill="#4aa3e0" stroke="#d8dee2" />
                <path d="M14 11h9v10h-7z" fill="#d5d9db" />
                <circle cx="11" cy="12" r="6" fill="#c7e6fa" stroke="#6aa1cf" strokeWidth="1.500" />
                <path d="M7 16 1 22" stroke="#f0a73b" strokeWidth="3.500" strokeLinecap="round" />
            </AppArt>
        ),
    },
    {
        id: 'PyCharm',
        art: (
            <AppArt>
                <path d="M1 1h12l-4 11-8 8z" fill="#21d789" />
                <path d="M13 1h10v14L10 23H1v-4z" fill="#d8ec3b" />
                <path d="M1 18l8-6 14 4-4 7H1z" fill="#13b1d1" opacity=".7" />
                <path d="M4 4h16v16H4z" fill="#000" />
                <text x="5" y="12.500" fontSize="8.500" fontWeight="700" fill="#fff">
                    PC
                </text>
                <path d="M6 17h6" stroke="#fff" strokeWidth="1.200" />
            </AppArt>
        ),
    },
    {
        id: 'Daemon Tools',
        art: (
            <AppArt>
                <circle cx="12" cy="12" r="11" fill="#2d93e6" stroke="#d8e4ee" strokeWidth="1.500" />
                <path d="M14 3 6 13h5l-2 8 9-11h-5z" fill="#fff" />
            </AppArt>
        ),
    },
    {
        id: 'Explorer',
        running: true,
        stacked: true,
        art: (
            <AppArt>
                <path d="M1 3h8l2 3h11v15H1z" fill="#f5c855" />
                <path d="M1 8h21v13H1z" fill="#fde08d" />
                <path d="M5 22v-7q0-2 2-2h10q2 0 2 2v7h-4v-5H9v5z" fill="#3aa0e0" />
            </AppArt>
        ),
    },
    {
        id: 'Command Prompt',
        art: (
            <AppArt>
                <path d="M1 3h22v18H1z" fill="#050505" stroke="#9b9b9b" />
                <path d="M1 3h22v2H1z" fill="#ddd" />
                <text x="3" y="11.500" fontSize="6" fontWeight="700" fill="#ddd">
                    C:\_
                </text>
            </AppArt>
        ),
    },
    {
        id: 'Notepad++',
        running: true,
        art: (
            <AppArt>
                <path d="M2 1h16v22H2z" fill="#f4f6ee" stroke="#aaa" />
                <path d="M2 12h16v11H2z" fill="#8bd419" />
                <path d="M4 4h10M5 8v5M8 8h6" stroke="#777" strokeWidth="1.500" />
                <path d="M21 1 13 18l-1 4 3-3L23 2z" fill="#efb44b" stroke="#8a5c1c" strokeWidth=".8" />
            </AppArt>
        ),
    },
    {
        id: 'Word',
        art: (
            <AppArt>
                <path d="M12 3h11v18H12z" fill="#fff" stroke="#2b579a" />
                <path d="M14 6h8M14 9h8M14 12h8M14 15h8M14 18h8" stroke="#2b579a" />
                <path d="M1 3 14 0v24L1 21z" fill="#2b579a" />
                <text x="7.500" y="16" textAnchor="middle" fontSize="10" fontWeight="700" fill="#fff">
                    W
                </text>
            </AppArt>
        ),
    },
    {
        id: 'Google Earth',
        art: (
            <AppArt>
                <circle cx="11" cy="11" r="10" fill="#1d4f2c" />
                <path d="M2 7q5-7 9-4-5 5-5 11-4-2-4-7zM13 3l6 4-3 7z" fill="#5fa34a" />
                <path d="M4 16q5 4 9 3l-3 2q-4 0-6-5z" fill="#4b90c9" />
                <path d="M9 2q7 6 9 17M16 5q5 5 5 14" stroke="#f2c619" fill="none" strokeWidth="2" />
                <path d="M14 18h10l-4 6z" fill="#f2c619" />
            </AppArt>
        ),
    },
    {
        id: 'Steam',
        art: (
            <span className="flex h-[22px] w-[22px] items-center justify-center rounded-full bg-gradient-to-b from-[#101c38] to-[#2a67a8] text-white">
                <FaSteamSymbol className="h-5 w-5" />
            </span>
        ),
    },
    {
        id: 'Dropbox',
        art: (
            <span className="flex h-6 w-6 items-center justify-center rounded bg-white text-[#0061ff]">
                <FaDropbox className="h-4 w-4" />
            </span>
        ),
    },
    {
        id: 'Battle.net',
        art: (
            <AppArt>
                <rect width="24" height="24" rx="3" fill="#000" />
                <g fill="none" stroke="#0f7fc9" strokeWidth="1.300">
                    <ellipse cx="12" cy="14" rx="9" ry="3" transform="rotate(12 12 14)" />
                    <ellipse cx="12" cy="12" rx="9" ry="3" transform="rotate(75 12 12)" />
                    <ellipse cx="12" cy="12" rx="9" ry="3" transform="rotate(135 12 12)" />
                </g>
            </AppArt>
        ),
    },
    { id: 'STM32CubeMX', art: cubeArt, running: true },
    { id: 'Arduino', art: arduinoArt, running: true, stacked: true },
    { id: 'Atmel Studio', art: acrylicArt, running: true },
]

function TaskButton({ app }: { app: TaskApp }) {
    return (
        <button type="button" title={app.id} className="flex flex-1 flex-col items-center">
            <span className="flex flex-1 items-center">{app.art}</span>
            <span
                className={`flex h-0.5 w-[37px] justify-end ${app.running ? 'bg-[#76b9ed]' : 'bg-transparent'}`}
            >
                {app.stacked ? <span className="w-2 bg-[#4f7ca3]" /> : null}
            </span>
        </button>
    )
}

function Taskbar() {
    return (
        <footer className="flex h-10 shrink-0 bg-[#0a0a0a] text-white">
            <div className="flex w-[148px]">
                <button type="button" title="Start" className="flex w-12 items-center justify-center">
                    <svg viewBox="0 0 16 16" className="h-4 w-4" aria-hidden="true">
                        <path d="M0 2.300 6.500 1.400V7.600H0zM7.300 1.300 16 0v7.600H7.300zM0 8.400h6.500v6.200L0 13.700zM7.300 8.400H16V16l-8.700-1.300z" fill="#fff" />
                    </svg>
                </button>
                <button type="button" title="Search" className="flex w-12 items-center justify-center">
                    <svg viewBox="0 0 16 16" className="h-4 w-4" aria-hidden="true">
                        <circle cx="10" cy="6" r="5.300" fill="none" stroke="#fff" strokeWidth="1.200" />
                        <path d="M6.200 9.800.5 15.500" stroke="#fff" strokeWidth="1.200" />
                    </svg>
                </button>
                <button type="button" title="Task View" className="flex w-12 items-center justify-center">
                    <svg viewBox="0 0 16 16" className="h-4 w-4" aria-hidden="true">
                        <path d="M.5 0v2.500h10V0M.5 16v-2.500h10V16M.5 5h10v6H.5zM14 0v16" fill="none" stroke="#fff" />
                        <path d="M13 4h2.500v3H13z" fill="#fff" />
                    </svg>
                </button>
            </div>
            <nav aria-label="Apps" className="flex flex-1">
                {taskApps.map((app) => (
                    <TaskButton key={app.id} app={app} />
                ))}
            </nav>
            <div className="flex w-[283px] items-center pl-6 text-[12px]">
                <svg viewBox="0 0 16 16" className="h-4 w-4" aria-hidden="true">
                    <g fill="none" stroke="#fff">
                        <circle cx="6" cy="7.500" r="2.500" />
                        <path d="M1.500 15.500q0-5.500 4.500-5.500t4.500 5.500" />
                        <circle cx="12" cy="3" r="2.500" />
                        <path d="M9.500 6.500q5.500-2 6 4.500" />
                    </g>
                </svg>
                <svg viewBox="0 0 12 7" className="ml-[22px] h-[7px] w-3" aria-hidden="true">
                    <path d="M.5 6.500 6 1l5.500 5.500" fill="none" stroke="#fff" strokeWidth="1.200" />
                </svg>
                <svg viewBox="0 0 13 13" className="ml-3 h-[13px] w-[13px]" aria-hidden="true">
                    <path
                        d="M1 13Q1 1 13 .7M4 13q0-8.500 9-9M7 13q0-5.500 6-6M10 13q0-3 3-3"
                        fill="none"
                        stroke="#fff"
                    />
                </svg>
                <FaDropbox className="ml-2.5 h-3.5 w-3.5" />
                <span className="ml-3 w-[23px]">DEU</span>
                <div className="ml-2.5 flex w-[60px] flex-col items-center leading-[18px]">
                    <p>20:12</p>
                    <p>13.09.2018</p>
                </div>
                <svg viewBox="0 0 16 16" className="ml-[14px] h-4 w-4" aria-hidden="true">
                    <path d="M.5 1.500h15v10.500h-5L8 15l-2.500-3h-5z" fill="none" stroke="#fff" />
                </svg>
                <span className="mr-1 ml-auto h-full w-px bg-[#555]" />
            </div>
        </footer>
    )
}

function App() {
    return (
        <div className="relative flex h-screen flex-col overflow-hidden bg-white font-[Roboto,'Open_Sans',sans-serif] text-[12px] text-black">
            <div className="shrink-0 bg-[#f2f2f2]">
                <TabStrip />
                <AddressBar />
                <BookmarkBar />
            </div>
            <WebPage />
            <Taskbar />
            <CubeWindow />
            <AdcDialog />
        </div>
    )
}

export default App
